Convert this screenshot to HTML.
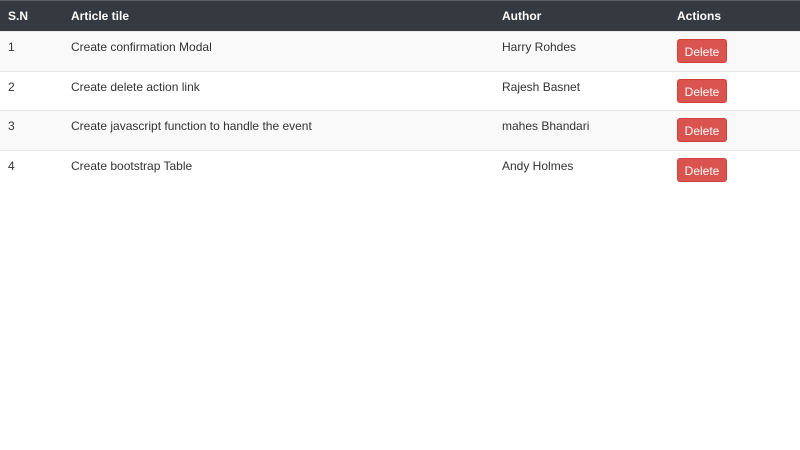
<!DOCTYPE html>
<html><head><style>
body{margin:0;background:#fff;font-family:"Liberation Sans",sans-serif;font-size:12px;color:#333}
table{width:800px;border-collapse:collapse}
th{background:#343a40;color:#fff;font-weight:bold;text-align:left;height:30px;padding:0 8px;border-top:1px solid #5a6068;font-size:12px}
td{height:38.5px;padding:0 8px;vertical-align:top;border-top:1px solid #e6e6e6}
td .t{display:block;padding-top:8px}
tr.o td{background:#f9f9f9}
.b{display:inline-block;margin-top:7px;width:50px;height:24px;line-height:24px;text-align:center;background:#d9534f;color:#fff;border-radius:3px;border:1px solid #d43f3a;box-sizing:border-box;font-size:12px}
</style></head><body>
<table>
<tr><th style="width:47px">S.N</th><th style="width:415px">Article tile</th><th style="width:159px">Author</th><th>Actions</th></tr>
<tr class="o"><td><span class="t">1</span></td><td><span class="t">Create confirmation Modal</span></td><td><span class="t">Harry Rohdes</span></td><td><span class="b">Delete</span></td></tr>
<tr><td><span class="t">2</span></td><td><span class="t">Create delete action link</span></td><td><span class="t">Rajesh Basnet</span></td><td><span class="b">Delete</span></td></tr>
<tr class="o"><td><span class="t">3</span></td><td><span class="t">Create javascript function to handle the event</span></td><td><span class="t">mahes Bhandari</span></td><td><span class="b">Delete</span></td></tr>
<tr><td><span class="t">4</span></td><td><span class="t">Create bootstrap Table</span></td><td><span class="t">Andy Holmes</span></td><td><span class="b">Delete</span></td></tr>
</table>
</body></html>
